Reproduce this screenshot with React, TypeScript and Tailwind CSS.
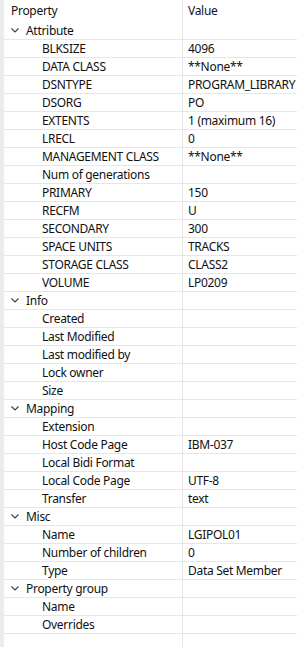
type Row = { label: string; value?: string };
type Group = { name: string; rows: Row[] };

const groups: Group[] = [
  {
    name: "Attribute",
    rows: [
      { label: "BLKSIZE", value: "4096" },
      { label: "DATA CLASS", value: "**None**" },
      { label: "DSNTYPE", value: "PROGRAM_LIBRARY" },
      { label: "DSORG", value: "PO" },
      { label: "EXTENTS", value: "1 (maximum 16)" },
      { label: "LRECL", value: "0" },
      { label: "MANAGEMENT CLASS", value: "**None**" },
      { label: "Num of generations" },
      { label: "PRIMARY", value: "150" },
      { label: "RECFM", value: "U" },
      { label: "SECONDARY", value: "300" },
      { label: "SPACE UNITS", value: "TRACKS" },
      { label: "STORAGE CLASS", value: "CLASS2" },
      { label: "VOLUME", value: "LP0209" },
    ],
  },
  {
    name: "Info",
    rows: [
      { label: "Created" },
      { label: "Last Modified" },
      { label: "Last modified by" },
      { label: "Lock owner" },
      { label: "Size" },
    ],
  },
  {
    name: "Mapping",
    rows: [
      { label: "Extension" },
      { label: "Host Code Page", value: "IBM-037" },
      { label: "Local Bidi Format" },
      { label: "Local Code Page", value: "UTF-8" },
      { label: "Transfer", value: "text" },
    ],
  },
  {
    name: "Misc",
    rows: [
      { label: "Name", value: "LGIPOL01" },
      { label: "Number of children", value: "0" },
      { label: "Type", value: "Data Set Member" },
    ],
  },
  {
    name: "Property group",
    rows: [{ label: "Name" }, { label: "Overrides" }],
  },
];

function Chevron() {
  return (
    <svg width="8" height="5" viewBox="0 0 8 5" className="shrink-0">
      <path d="M0.5 0.5L4 4L7.5 0.5" fill="none" stroke="#3c3c3c" strokeWidth="1.1" />
    </svg>
  );
}

function GroupRow({ name }: { name: string }) {
  return (
    <div className="flex h-[18px] border-b border-[#e6e6e6]">
      <div className="flex w-[179px] items-center gap-[7px] border-r border-[#e6e6e6] pl-[7px]">
        <Chevron />
        <span>{name}</span>
      </div>
      <div className="flex-1" />
    </div>
  );
}

function PropRow({ row }: { row: Row }) {
  return (
    <div className="flex h-[18px] border-b border-[#e6e6e6]">
      <div className="flex w-[179px] items-center overflow-hidden whitespace-nowrap border-r border-[#e6e6e6] pl-[38px]">
        {row.label}
      </div>
      <div className="flex min-w-0 flex-1 items-center whitespace-nowrap pl-[5px]">
        {row.value}
      </div>
    </div>
  );
}

export default function App() {
  return (
    <div className="flex h-[647px] w-[297px] overflow-hidden bg-white font-['Noto_Sans',sans-serif] text-[12px] leading-none tracking-[-0.3px] text-[#111]">
      <div className="w-[4px] shrink-0 bg-[#ececec]" />
      <div className="flex min-w-0 flex-1 flex-col">
        {/* header */}
        <div className="flex h-[22px]">
          <div className="flex w-[179px] items-center border-r border-[#e6e6e6] pl-[7px]">Property</div>
          <div className="flex flex-1 items-center pl-[5px]">Value</div>
        </div>
        {groups.map((g) => (
          <div key={g.name}>
            <GroupRow name={g.name} />
            {g.rows.map((r, i) => (
              <PropRow key={g.name + i} row={r} />
            ))}
          </div>
        ))}
        {/* empty filler below the last row */}
        <div className="flex flex-1">
          <div className="w-[179px] border-r border-[#e6e6e6]" />
        </div>
      </div>
    </div>
  );
}
